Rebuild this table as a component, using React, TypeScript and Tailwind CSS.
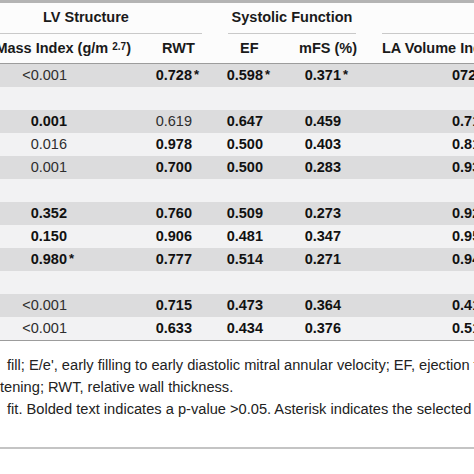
type Cell = { v: string; b?: boolean; s?: boolean };

type Row = Cell[] | null;

const rows: Row[] = [
  [{ v: "<0.001" }, { v: "0.728", b: true, s: true }, { v: "0.598", b: true, s: true }, { v: "0.371", b: true, s: true }, { v: "0726", b: true }],
  null,
  [{ v: "0.001", b: true }, { v: "0.619" }, { v: "0.647", b: true }, { v: "0.459", b: true }, { v: "0.714", b: true }],
  [{ v: "0.016" }, { v: "0.978", b: true }, { v: "0.500", b: true }, { v: "0.403", b: true }, { v: "0.812", b: true }],
  [{ v: "0.001" }, { v: "0.700", b: true }, { v: "0.500", b: true }, { v: "0.283", b: true }, { v: "0.934", b: true }],
  null,
  [{ v: "0.352", b: true }, { v: "0.760", b: true }, { v: "0.509", b: true }, { v: "0.273", b: true }, { v: "0.921", b: true }],
  [{ v: "0.150", b: true }, { v: "0.906", b: true }, { v: "0.481", b: true }, { v: "0.347", b: true }, { v: "0.956", b: true }],
  [{ v: "0.980", b: true, s: true }, { v: "0.777", b: true }, { v: "0.514", b: true }, { v: "0.271", b: true }, { v: "0.948", b: true }],
  null,
  [{ v: "<0.001" }, { v: "0.715", b: true }, { v: "0.473", b: true }, { v: "0.364", b: true }, { v: "0.412", b: true }],
  [{ v: "<0.001" }, { v: "0.633", b: true }, { v: "0.434", b: true }, { v: "0.376", b: true }, { v: "0.518", b: true }],
];

function Num({ cell, width }: { cell: Cell; width: string }) {
  return (
    <div className="flex items-center whitespace-nowrap">
      <span className={`${width} text-right ${cell.b ? "font-bold text-[#111]" : "text-[#2e2e2e]"}`}>{cell.v}</span>
      {cell.s && <span className="ml-[2px] -mt-[3px] text-[13px] leading-none font-bold text-[#111]">*</span>}
    </div>
  );
}

export default function App() {
  return (
    <div className="w-[474px] h-[474px] overflow-hidden bg-white font-['Liberation_Sans',Arial,sans-serif] text-[14.5px]">
      <div className="h-[3px] bg-[#b4b4b4]" />

      <div className="bg-[#fcfcfc]">
        {/* header row 1 */}
        <div className="flex h-[31px] font-bold text-[#1a1a1a]">
          <div className="w-[202px] border-b border-[#c9c9c9] pl-[43px] flex items-center">LV Structure</div>
          <div className="w-[26px]" />
          <div className="w-[128px] border-b border-[#c9c9c9] flex items-center justify-center whitespace-nowrap">
            Systolic Function
          </div>
          <div className="w-[26px]" />
          <div className="flex-1 border-b border-[#c9c9c9]" />
        </div>

        {/* header row 2 */}
        <div className="flex h-[30px] items-center font-bold text-[#1a1a1a] border-b border-[#9c9c9c] whitespace-nowrap">
          <div className="w-[131px] shrink-0 flex justify-end">
            <span>
              Mass Index (g/m <sup className="text-[10px] relative -top-[3px]">2.7</sup>)
            </span>
          </div>
          <div className="w-[31px] shrink-0" />
          <div className="w-[40px] shrink-0">RWT</div>
          <div className="w-[38px] shrink-0" />
          <div className="w-[59px] shrink-0">EF</div>
          <div className="w-[83px] shrink-0">mFS (%)</div>
          <div className="shrink-0">LA Volume Index</div>
        </div>
      </div>

      {/* body */}
      <div className="border-b border-[#9c9c9c]">
        {rows.map((row, i) => (
          <div key={i} className={`flex h-[23px] items-center ${i % 2 === 0 ? "bg-[#dcdcdd]" : "bg-[#f2f2f3]"}`}>
            {row && (
              <>
                <div className="w-[145px] shrink-0">
                  <Num cell={row[0]} width="w-[67px]" />
                </div>
                <div className="w-[70px] shrink-0">
                  <Num cell={row[1]} width="w-[47px]" />
                </div>
                <div className="w-[70px] shrink-0">
                  <Num cell={row[2]} width="w-[48px]" />
                </div>
                <div className="w-[75px] shrink-0">
                  <Num cell={row[3]} width="w-[56px]" />
                </div>
                <div className="flex-1 pl-[92px] whitespace-nowrap font-bold text-[#111]">{row[4].v}</div>
              </>
            )}
          </div>
        ))}
      </div>

      {/* footnote */}
      <div className="pt-[13px] pb-[27px] border-b-2 border-[#c4c4c4] text-[#222] text-[14.65px] leading-[22px] whitespace-nowrap">
        <div className="pl-[7px]">fill; E/e', early filling to early diastolic mitral annular velocity; EF, ejection fraction;</div>
        <div>tening; RWT, relative wall thickness.</div>
        <div className="pl-[7px]">fit. Bolded text indicates a p-value &gt;0.05. Asterisk indicates the selected model.</div>
      </div>
    </div>
  );
}
